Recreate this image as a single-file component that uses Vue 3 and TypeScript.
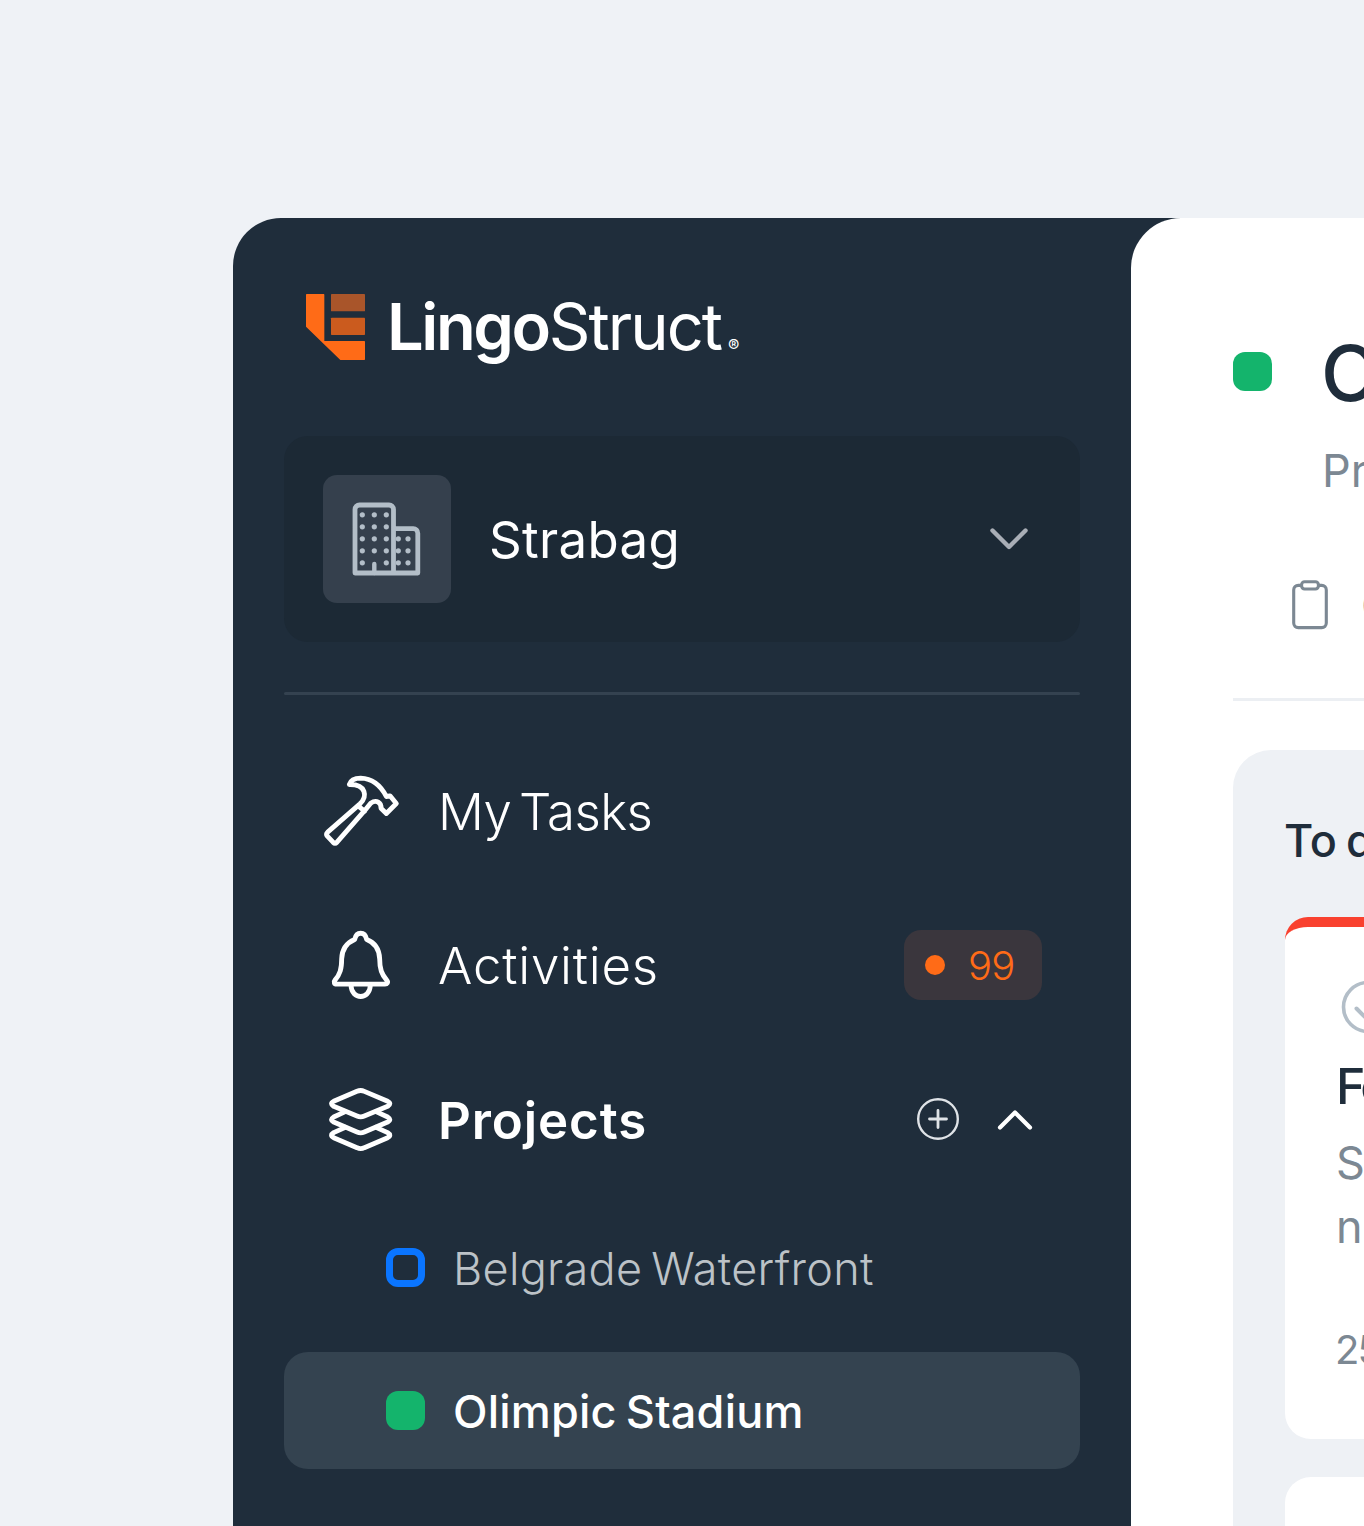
<script setup lang="ts">
interface Project {
  name: string
  state: 'open' | 'active'
}

const projects: Project[] = [
  { name: 'Belgrade Waterfront', state: 'open' },
  { name: 'Olimpic Stadium', state: 'active' },
]

const dotRows = [39.8, 51.8, 63.8, 75.8, 87.8]
const windows = dotRows.flatMap((y, row) =>
  [39.3, 51.3, 63.3, 75.3, 85]
    .map((x, col) => ({ x, y, col }))
    .filter(({ col }) => !(col > 2 && row < 2) && !(row === 4 && col === 1)),
)
</script>

<template>
  <div class="stage">
    <div class="window">
      <aside class="sidebar">
        <header class="brand">
          <svg class="mark" viewBox="48 44 177 198">
            <path d="M50 44H101a2 2 0 0 1 2 2V185H223a2 2 0 0 1 2 2V240a2 2 0 0 1-2 2H151L48 142V46a2 2 0 0 1 2-2Z" fill="#ff6b17" />
            <rect x="123" y="44" width="102" height="52" rx="2" fill="#a9552a" />
            <rect x="123" y="115" width="102" height="52" rx="2" fill="#cb5b1e" />
          </svg>
          <span class="wordmark"><b>Lingo</b><span class="light">Struct</span></span>
          <span class="reg">®</span>
        </header>

        <div class="company">
          <div class="tile">
            <svg viewBox="0 0 128 128" fill="none" stroke="#b3bec8" stroke-width="4.8" stroke-linejoin="round" stroke-linecap="round">
              <path d="M32 98V34.500a4.500 4.500 0 0 1 4.500-4.500H66a4.500 4.500 0 0 1 4.500 4.500V98ZM70.500 53.700H90.300a4.500 4.500 0 0 1 4.500 4.500V98H70.500" />
              <path d="M51.300 98V89" stroke-width="4.400" />
              <circle v-for="(w, i) in windows" :key="i" :cx="w.x" :cy="w.y" r="2.6" fill="#b3bec8" stroke="none" />
            </svg>
          </div>
          <span class="company-name">Strabag</span>
          <svg class="chev-down" viewBox="0 0 42 26" fill="none" stroke="#a9aeb6" stroke-width="4.4" stroke-linecap="round" stroke-linejoin="round">
            <path d="M4.500 4.500 21 21 37.500 4.500" />
          </svg>
        </div>

        <div class="rule" />

        <nav class="nav">
          <a class="item">
            <svg class="icon" viewBox="30 32.5 240 240">
              <path d="M118 73C122 60 136 54 152 54C190 55 214 80 229 109L240 107L259 130L229 160L213 144C214 128 200 117 182 129L165 150L81 246Q75 252 69 246L52 228Q47 222 53 216L150 131C172 110 170 72 118 73ZM145 138L164 153" />
            </svg>
            <span class="label tasks">My Tasks</span>
          </a>
          <a class="item">
            <svg class="icon" viewBox="30 30.5 240 240">
              <path d="M134 74C139 49 165 49 170 74C196 84 208 104 209 132C209 163 215 178 230 196C236 203 231 208 225 208H80C73 208 70 202 75 196C90 178 95 163 95 132C96 104 110 84 134 74ZM123 212C125 256 179 256 181 212" />
            </svg>
            <span class="label acts">Activities</span>
            <span class="badge"><i class="dot" /><span class="count">99</span></span>
          </a>
          <a class="item">
            <svg class="icon" viewBox="30 30 240 240">
              <path d="M71 94L141 64Q152 59 163 64L233 94Q246 101 233 109L163 138Q152 143 141 138L71 109Q58 101 71 94Z" />
              <path d="M106 125L71 141Q58 149 71 156L141 186Q152 191 163 186L233 156Q246 149 233 141L198 125" />
              <path d="M106 172L71 188Q58 196 71 203L141 233Q152 239 163 233L233 203Q246 196 233 188L198 172" />
            </svg>
            <span class="label projs">Projects</span>
            <svg class="plus" viewBox="0 0 44 44" fill="none" stroke="#dfe3e7" stroke-width="2.4" stroke-linecap="round">
              <circle cx="22" cy="22" r="19.8" />
              <path d="M22 13.500V30.500M13.500 22H30.500" stroke-width="2.8" />
            </svg>
            <svg class="chev-up" viewBox="0 0 38 24" fill="none" stroke="#fff" stroke-width="4.200" stroke-linecap="round" stroke-linejoin="round">
              <path d="M4 19.500 19 4.500 34 19.500" />
            </svg>
          </a>
        </nav>

        <ul class="projects">
          <li v-for="p in projects" :key="p.name" :class="['project', p.state]">
            <i class="swatch" />
            <span class="project-name">{{ p.name }}</span>
          </li>
        </ul>
      </aside>

      <main class="main">
        <div class="title-row">
          <i class="swatch green" />
          <h1>Olimpic</h1>
        </div>
        <p class="subtitle">Project</p>
        <div class="tabs">
          <svg class="clipboard" viewBox="0 0 36 50" fill="none" stroke="#7c8893" stroke-width="3.1">
            <rect x="1.700" y="5.400" width="32.600" height="42.200" rx="4.500" />
            <rect x="9.600" y="1.800" width="16.800" height="7.200" rx="3" fill="#fff" />
          </svg>
          <span>Overview</span>
        </div>
        <div class="main-rule" />
        <section class="column">
          <h2>To do</h2>
          <article class="card urgent">
            <svg class="check" viewBox="0 0 54 54" fill="none" stroke="#b3bec8" stroke-width="3.6" stroke-linecap="round" stroke-linejoin="round">
              <circle cx="27" cy="27" r="24.500" />
              <path d="M15.500 28.500 23.500 36.500 38.500 20" stroke-width="4" />
            </svg>
            <h3>Foundation</h3>
            <p class="body">Set<br />new</p>
            <p class="date">25</p>
          </article>
          <article class="card" />
        </section>
      </main>
    </div>
  </div>
</template>

<style>
html,
body {
  margin: 0;
  overflow: hidden;
}
</style>

<style scoped>
.stage {
  box-sizing: border-box;
  width: 1364px;
  height: 1526px;
  padding: 218px 0 0 233px;
  overflow: hidden;
  background: #eff2f6;
  font-family: Inter, 'Liberation Sans', sans-serif;
  color: #fff;
}
.window {
  display: flex;
  height: 1308px;
  border-radius: 48px 0 0 0;
  background: #1f2d3b;
  overflow: hidden;
}
.sidebar {
  box-sizing: border-box;
  flex: none;
  width: 898px;
  padding: 64px 51px 0 51px;
}
.brand {
  display: flex;
  align-items: center;
  height: 90px;
  padding-left: 22px;
}
.mark {
  width: 59px;
  height: 66px;
}
.wordmark {
  margin-left: 22px;
  width: 337px;
  font-size: 65px;
  line-height: 88px;
  white-space: nowrap;
}
.wordmark b {
  font-weight: 600;
  letter-spacing: -2.4px;
}
.wordmark .light {
  font-weight: 400;
  letter-spacing: -2px;
}
.reg {
  margin-top: 38px;
  margin-left: 4px;
  font-size: 17px;
  line-height: 16px;
}
.company {
  box-sizing: border-box;
  display: flex;
  align-items: center;
  height: 206px;
  margin-top: 64px;
  padding: 0 50px 0 39px;
  border-radius: 24px;
  background: #1c2935;
}
.tile {
  width: 128px;
  height: 128px;
  border-radius: 14px;
  background: #35404d;
}
.tile svg {
  display: block;
}
.company-name {
  flex: 1;
  margin-left: 38px;
  font-size: 51px;
  letter-spacing: 0.3px;
}
.chev-down {
  width: 42px;
  height: 26px;
}
.rule {
  height: 3px;
  margin-top: 50px;
  border-radius: 2px;
  background: #344250;
}
.nav {
  padding-top: 39px;
}
.item {
  display: flex;
  align-items: center;
  height: 154.300px;
  padding: 0 46px 0 36px;
}
.icon {
  width: 80px;
  height: 80px;
  fill: none;
  stroke: #fff;
  stroke-width: 14.5;
  stroke-linecap: round;
  stroke-linejoin: round;
}
.label {
  flex: 1;
  margin-left: 38px;
  font-size: 51px;
  font-weight: 300;
}
.tasks {
  letter-spacing: -0.600px;
  word-spacing: -6px;
}
.acts {
  letter-spacing: 0.800px;
}
.projs {
  padding-top: 2px;
  font-weight: 600;
  letter-spacing: 0.900px;
}
.badge {
  box-sizing: border-box;
  display: flex;
  align-items: center;
  width: 138px;
  height: 70px;
  margin-right: -8px;
  padding-left: 21px;
  border-radius: 17px;
  background: #3a363d;
}
.dot {
  width: 20px;
  height: 20px;
  border-radius: 50%;
  background: #ff6b17;
}
.count {
  margin-left: 23px;
  padding-top: 1px;
  color: #ff6b17;
  font-size: 40px;
  font-weight: 300;
  letter-spacing: -0.800px;
}
.plus {
  width: 44px;
  height: 44px;
  margin-top: -1px;
}
.chev-up {
  width: 38px;
  height: 24px;
  margin: 0 0 0 36px;
}
.projects {
  display: flex;
  flex-direction: column;
  gap: 26px;
  margin: 0;
  padding: 12px 0 0;
  list-style: none;
}
.project {
  box-sizing: border-box;
  display: flex;
  align-items: center;
  height: 117px;
  padding-left: 102px;
  border-radius: 24px;
  font-size: 45px;
}
.swatch {
  box-sizing: border-box;
  flex: none;
  width: 39px;
  height: 39px;
  border-radius: 12px;
}
.open .swatch {
  border: 7px solid #0a75ff;
}
.active .swatch,
.green {
  background: #14b46c;
}
.project-name {
  margin-left: 28px;
  padding-top: 2px;
  white-space: nowrap;
}
.open .project-name {
  color: #bcc2c7;
  font-weight: 300;
  letter-spacing: 0.300px;
  word-spacing: -4px;
}
.active {
  background: #344350;
}
.active .project-name {
  font-weight: 500;
  letter-spacing: 0.200px;
  word-spacing: -3px;
}
.main {
  box-sizing: border-box;
  flex: 1;
  min-width: 0;
  padding: 103px 0 0 102px;
  overflow: hidden;
  border-radius: 50px 0 0 0;
  background: #fff;
  white-space: nowrap;
}
.title-row {
  display: flex;
  align-items: center;
  height: 100px;
}
h1,
h2,
h3,
p {
  margin: 0;
}
h1 {
  margin-left: 49px;
  padding-top: 4px;
  color: #1f2d3b;
  font-size: 77px;
  font-weight: 500;
}
.subtitle {
  padding: 20px 0 0 89px;
  color: #7c8893;
  font-size: 45px;
  font-weight: 400;
  line-height: 60px;
}
.tabs {
  display: flex;
  align-items: center;
  height: 60px;
  margin-top: 74px;
  padding-left: 59px;
  color: #7c8893;
  font-size: 45px;
}
.clipboard {
  flex: none;
  width: 36px;
  height: 50px;
  margin-right: 33px;
}
.main-rule {
  height: 3px;
  margin-top: 63px;
  background: #eceff3;
}
.column {
  height: 900px;
  margin-top: 49px;
  padding: 61px 0 0 52px;
  border-radius: 38px 0 0 0;
  background: #eef1f5;
}
h2 {
  height: 60px;
  margin-bottom: 46px;
  margin-left: -1px;
  color: #1f2d3b;
  font-size: 45px;
  font-weight: 500;
  line-height: 60px;
  word-spacing: -3px;
}
.card {
  box-sizing: border-box;
  width: 400px;
  height: 522px;
  margin-bottom: 38px;
  padding: 53px 0 0 51px;
  border-radius: 26px;
  background: #fff;
}
.urgent {
  border-top: 10px solid #f9412f;
  border-top-left-radius: 23px;
}
.check {
  display: block;
  width: 54px;
  height: 54px;
  margin-left: 5px;
}
h3 {
  margin-top: 22px;
  color: #1f2d3b;
  font-size: 50px;
  font-weight: 500;
  line-height: 60px;
  letter-spacing: -3.500px;
}
.body {
  margin-top: 15px;
  color: #7c8893;
  font-size: 45px;
  font-weight: 400;
  line-height: 64px;
}
.date {
  margin-top: 61px;
  margin-left: -1px;
  color: #7c8893;
  font-size: 40px;
  line-height: 60px;
  letter-spacing: -2px;
}
</style>
